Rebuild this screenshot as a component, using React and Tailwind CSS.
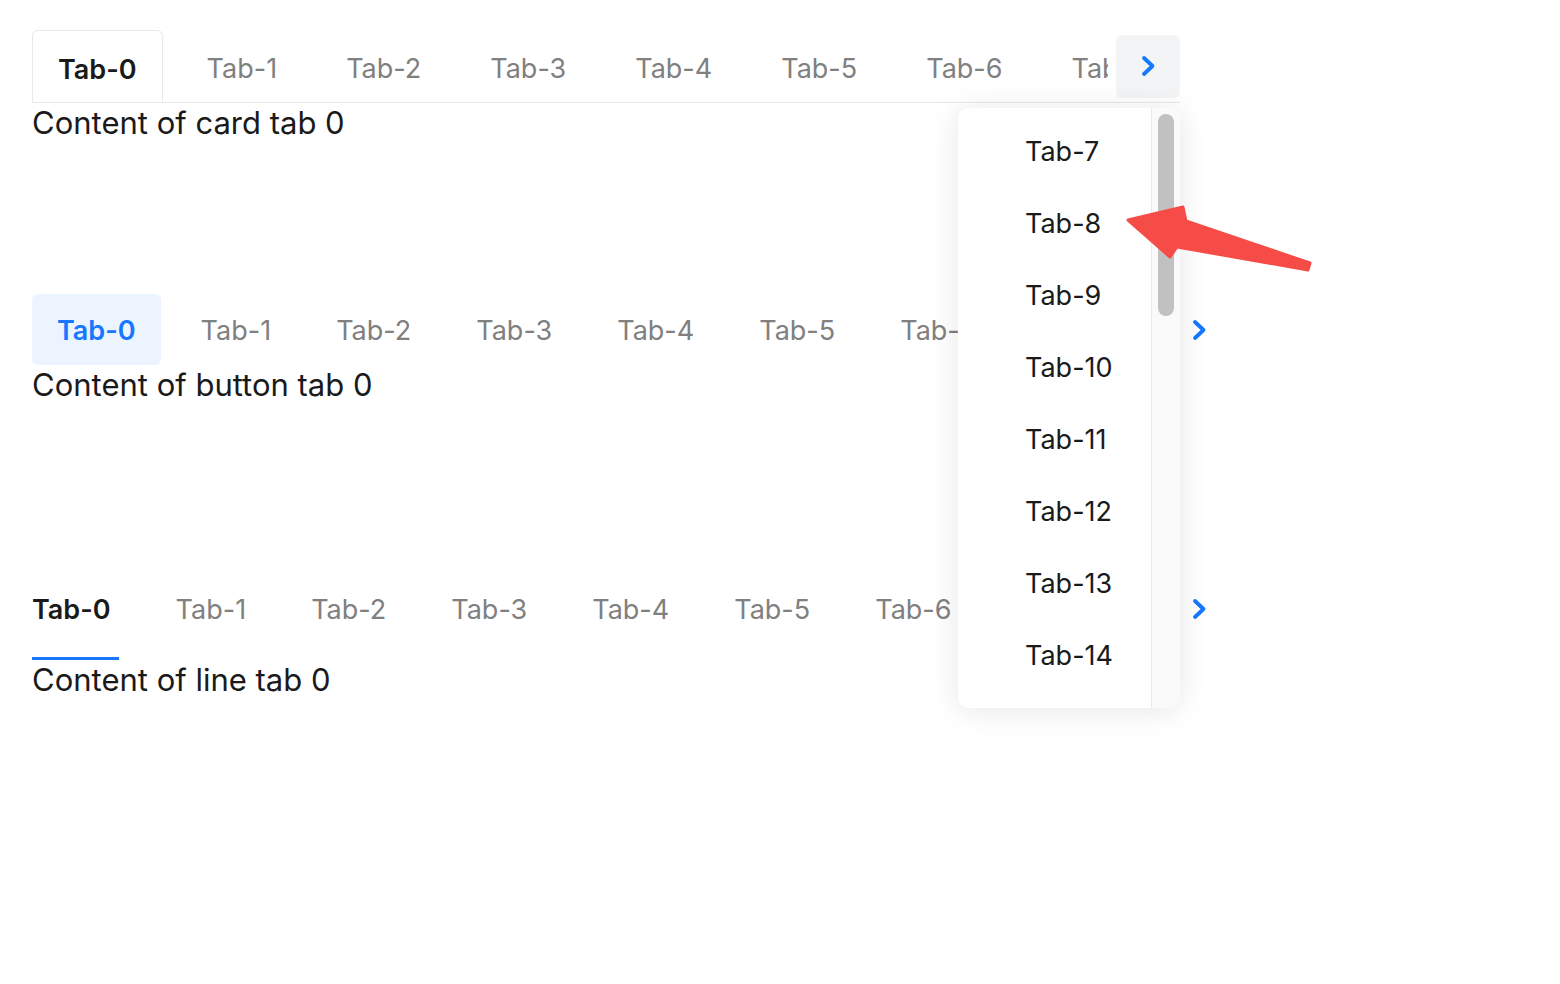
import React from "react";

const Chevron = () => (
  <svg width="15" height="22" viewBox="0 0 15 22" fill="none">
    <path d="M3 3 L11.5 11 L3 19" stroke="#1677ff" strokeWidth="3.8" strokeLinecap="round" strokeLinejoin="round" />
  </svg>
);

const labels = Array.from({ length: 10 }, (_, i) => `Tab-${i}`);
const menu = [7, 8, 9, 10, 11, 12, 13, 14];

export default function App() {
  return (
    <div className="relative w-[1560px] h-[984px] bg-white overflow-hidden font-['Inter','Noto_Sans',sans-serif] text-[#1a1a1a]">
      <div className="pt-[30px] pl-[32px]">
        {/* Card tabs */}
        <div className="w-[1148px]">
          <div className="flex items-center h-[73px] border-b border-[#e8e8e8]">
            <div className="flex-1 h-full overflow-hidden mr-[8px]">
              <div className="flex gap-[19px] h-full whitespace-nowrap">
                {labels.map((l, i) => (
                  <div
                    key={l}
                    className={
                      i === 0
                        ? "h-[74px] px-[25px] pt-[6px] flex items-center border border-b-0 border-[#e8e8e8] rounded-t-[6px] bg-white text-[27px] font-semibold text-[#1a1a1a]"
                        : "h-[73px] px-[25px] pt-[6px] flex items-center text-[27px] text-[#808080]"
                    }
                  >
                    {l}
                  </div>
                ))}
              </div>
            </div>
            <div className="w-[64px] h-[63px] shrink-0 rounded-[6px] bg-[#f3f4f5] flex items-center justify-center">
              <Chevron />
            </div>
          </div>
          <div className="text-[31px] leading-[40px]">Content of card tab 0</div>
        </div>

        {/* Button tabs */}
        <div className="mt-[151px] w-[1187px]">
          <div className="flex items-center h-[71px]">
            <div className="flex-1 h-full overflow-hidden">
              <div className="flex gap-[15px] h-full whitespace-nowrap">
                {labels.map((l, i) => (
                  <div
                    key={l}
                    className={
                      i === 0
                        ? "h-[71px] px-[25px] pt-[4px] flex items-center rounded-[6px] bg-[#ebf4ff] text-[27px] font-semibold text-[#1677ff]"
                        : "h-[71px] px-[25px] pt-[4px] flex items-center text-[27px] text-[#808080]"
                    }
                  >
                    {l}
                  </div>
                ))}
              </div>
            </div>
            <div className="w-[40px] h-[63px] shrink-0 flex items-center justify-center">
              <Chevron />
            </div>
          </div>
          <div className="text-[31px] leading-[40px]">Content of button tab 0</div>
        </div>

        {/* Line tabs */}
        <div className="mt-[184px] w-[1187px]">
          <div className="flex items-start h-[71px]">
            <div className="flex-1 h-full overflow-hidden">
              <div className="flex gap-[65px] h-full whitespace-nowrap">
                {labels.map((l, i) => (
                  <div key={l} className="relative h-[71px] pt-[1px]">
                    <div
                      className={
                        i === 0
                          ? "text-[27px] leading-[40px] font-semibold text-[#1a1a1a]"
                          : "text-[27px] leading-[40px] text-[#808080]"
                      }
                    >
                      {l}
                    </div>
                    {i === 0 && (
                      <div className="absolute left-[-1px] bottom-0 w-[88px] h-[3px] bg-[#1677ff]" />
                    )}
                  </div>
                ))}
              </div>
            </div>
            <div className="w-[40px] h-[40px] shrink-0 flex items-center justify-center">
              <Chevron />
            </div>
          </div>
          <div className="text-[31px] leading-[40px]">Content of line tab 0</div>
        </div>
      </div>

      {/* Dropdown menu */}
      <div className="absolute left-[958px] top-[108px] w-[222px] h-[600px] rounded-[10px] bg-white shadow-[0_2px_30px_rgba(0,0,0,0.10)] overflow-hidden flex">
        <div className="flex-1 pt-[8px]">
          {menu.map((n) => (
            <div key={n} className="h-[72px] pl-[67px] flex items-center text-[27px] text-[#1a1a1a]">
              Tab-{n}
            </div>
          ))}
        </div>
        <div className="w-[29px] shrink-0 bg-[#fafafa] border-l border-[#e8e8e8] pt-[6px] pl-[6px]">
          <div className="w-[16px] h-[202px] rounded-full bg-[#c1c1c1]" />
        </div>
      </div>

      {/* Red arrow annotation */}
      <svg className="absolute left-[1120px] top-[200px]" width="200" height="80" viewBox="0 0 200 80">
        <polygon
          points="8,20 63,7 66,21 190,63 188,70 57,47 50,57"
          fill="#f64c48"
          stroke="#f64c48"
          strokeWidth="3"
          strokeLinejoin="round"
        />
      </svg>
    </div>
  );
}
